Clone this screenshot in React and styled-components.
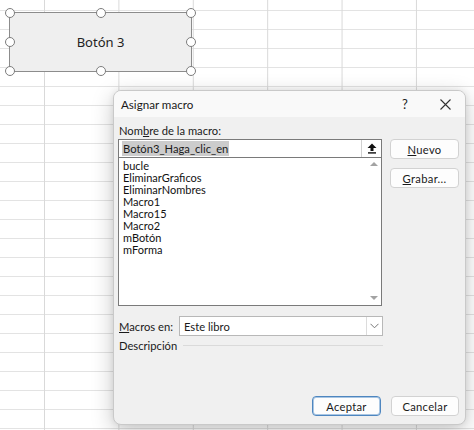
import React from 'react';
import styled, { createGlobalStyle } from 'styled-components';

const GlobalStyle = createGlobalStyle`
  html, body {
    margin: 0;
    padding: 0;
    background: #ffffff;
  }
  * {
    box-sizing: border-box;
  }
`;

const Sheet = styled.div`
  position: relative;
  width: 474px;
  height: 430px;
  overflow: hidden;
  font-family: Lato, 'Noto Sans', sans-serif;
  color: #1a1a1a;
  background-color: #ffffff;
  background-image:
    linear-gradient(to right, #d9d9d9 1px, transparent 1px),
    linear-gradient(to bottom, #e3e3e3 1px, transparent 1px);
  background-size: 74.4px 100%, 100% 19px;
  background-position: 44px 0, 0 10px;
`;

const Shape = styled.div`
  position: absolute;
  left: 9px;
  top: 12px;
  width: 183px;
  height: 60px;
  background: #efefef;
  border: 1.5px solid #8c8c8c;
  display: flex;
  align-items: center;
  justify-content: center;
  font-family: 'Noto Sans', sans-serif;
  font-size: 13px;
  color: #222;
`;

const Handle = styled.span`
  position: absolute;
  left: ${p => p.$x}%;
  top: ${p => p.$y}%;
  width: 10px;
  height: 10px;
  margin: -5px 0 0 -5px;
  border-radius: 50%;
  background: #ffffff;
  border: 1.5px solid #7d7d7d;
`;

const Dialog = styled.div`
  position: absolute;
  left: 113px;
  top: 90px;
  width: 353px;
  height: 335px;
  border-radius: 8px;
  background: #f0f0f0;
  border: 1px solid #c9c9c9;
  box-shadow: 0 6px 22px rgba(0, 0, 0, 0.22), 0 0 6px rgba(0, 0, 0, 0.08);
  display: flex;
  flex-direction: column;
  overflow: hidden;
  font-size: 11.2px;
`;

const TitleBar = styled.div`
  height: 26px;
  background: #f9f9f9;
  display: flex;
  align-items: center;
  padding-left: 7px;
  flex-shrink: 0;
`;

const TitleText = styled.div`
  flex: 1;
  font-size: 11.6px;
  color: #1a1a1a;
`;

const TitleButton = styled.div`
  width: 40px;
  height: 26px;
  display: flex;
  align-items: center;
  justify-content: center;
  font-size: 13px;
  color: #222;
`;

const Body = styled.div`
  flex: 1;
  display: flex;
  flex-direction: column;
  padding: 6px 6px 8px 4px;
`;

const TopRow = styled.div`
  display: flex;
  gap: 8px;
`;

const LeftCol = styled.div`
  width: 265px;
  display: flex;
  flex-direction: column;
`;

const RightCol = styled.div`
  width: 69px;
  padding-top: 16px;
  display: flex;
  flex-direction: column;
  gap: 9px;
`;

const Label = styled.div`
  height: 16px;
  line-height: 16px;
  padding-left: 1px;
  white-space: nowrap;
`;

const NameInput = styled.div`
  height: 19px;
  display: flex;
  background: #ffffff;
  border: 1px solid #7a7a7a;
`;

const InputText = styled.div`
  flex: 1;
  display: flex;
  align-items: center;
  padding-left: 3px;
`;

const Selected = styled.span`
  background: #cccccc;
  line-height: 15px;
  padding: 0 1px;
`;

const UpButton = styled.div`
  width: 20px;
  border-left: 1px solid #d0d0d0;
  display: flex;
  align-items: center;
  justify-content: center;
`;

const ListBox = styled.div`
  height: 149px;
  margin-top: -1px;
  display: flex;
  background: #ffffff;
  border: 1px solid #7a7a7a;
`;

const Items = styled.div`
  flex: 1;
  padding: 2px 0 0 4px;
  display: flex;
  flex-direction: column;
`;

const Item = styled.div`
  height: 12px;
  line-height: 12px;
  font-size: 11px;
  color: #111;
  white-space: nowrap;
`;

const ScrollTrack = styled.div`
  width: 15px;
  display: flex;
  flex-direction: column;
  justify-content: space-between;
  align-items: center;
  padding: 4px 0 5px;
`;

const Arrow = styled.span`
  width: 0;
  height: 0;
  border-left: 4px solid transparent;
  border-right: 4px solid transparent;
  ${p => (p.$down ? 'border-top: 4px solid #a3a3a3;' : 'border-bottom: 4px solid #a3a3a3;')}
`;

const Button = styled.div`
  width: ${p => p.$w || 69}px;
  height: 20px;
  display: flex;
  align-items: center;
  justify-content: center;
  background: #fdfdfd;
  border: 1px solid ${p => (p.$primary ? '#4e86bf' : '#d2d2d2')};
  box-shadow: ${p => (p.$primary ? 'inset 0 0 0 1px #a9c6e3' : 'none')};
  border-radius: 4px;
  color: #1a1a1a;
  letter-spacing: 0.3px;
`;

const MacrosRow = styled.div`
  margin-top: 10px;
  display: flex;
  align-items: center;
`;

const MacrosLabel = styled.div`
  width: 61px;
  padding-left: 1px;
  white-space: nowrap;
`;

const Select = styled.div`
  width: 204px;
  height: 20px;
  display: flex;
  background: #ffffff;
  border: 1px solid #b8b8b8;
`;

const SelectValue = styled.div`
  flex: 1;
  display: flex;
  align-items: center;
  padding-left: 4px;
`;

const SelectArrow = styled.div`
  width: 16px;
  border-left: 1px solid #dcdcdc;
  display: flex;
  align-items: center;
  justify-content: center;
`;

const DescRow = styled.div`
  margin-top: 2px;
  width: 265px;
  height: 14px;
  display: flex;
  align-items: center;
  gap: 6px;
  padding-left: 1px;
`;

const Rule = styled.div`
  flex: 1;
  height: 1px;
  background: #dadada;
`;

const Footer = styled.div`
  margin-top: auto;
  display: flex;
  justify-content: flex-end;
  gap: 10px;
`;

const handles = [
  [0, 0], [50, 0], [100, 0],
  [0, 50], [100, 50],
  [0, 100], [50, 100], [100, 100],
];

const macros = [
  'bucle',
  'EliminarGraficos',
  'EliminarNombres',
  'Macro1',
  'Macro15',
  'Macro2',
  'mBotón',
  'mForma',
];

function App() {
  return (
    <Sheet>
      <GlobalStyle />
      <Shape>
        Botón 3
        {handles.map(([x, y]) => (
          <Handle key={`${x}-${y}`} $x={x} $y={y} />
        ))}
      </Shape>

      <Dialog>
        <TitleBar>
          <TitleText>Asignar macro</TitleText>
          <TitleButton>?</TitleButton>
          <TitleButton>
            <svg width="11" height="11" viewBox="0 0 11 11">
              <path d="M0.5 0.5 L10.5 10.5 M10.5 0.5 L0.5 10.5" stroke="#333" strokeWidth="1.1" />
            </svg>
          </TitleButton>
        </TitleBar>

        <Body>
          <TopRow>
            <LeftCol>
              <Label>Nom<u>b</u>re de la macro:</Label>
              <NameInput>
                <InputText>
                  <Selected>Botón3_Haga_clic_en</Selected>
                </InputText>
                <UpButton>
                  <svg width="10" height="11" viewBox="0 0 10 11">
                    <path d="M5 0.5 L9.5 5 H6.5 V8 H3.5 V5 H0.5 Z" fill="#111" />
                    <rect x="1" y="9.2" width="8" height="1.4" fill="#111" />
                  </svg>
                </UpButton>
              </NameInput>
              <ListBox>
                <Items>
                  {macros.map(m => (
                    <Item key={m}>{m}</Item>
                  ))}
                </Items>
                <ScrollTrack>
                  <Arrow />
                  <Arrow $down />
                </ScrollTrack>
              </ListBox>
            </LeftCol>
            <RightCol>
              <Button><u>N</u>uevo</Button>
              <Button><u>G</u>rabar...</Button>
            </RightCol>
          </TopRow>

          <MacrosRow>
            <MacrosLabel><u>M</u>acros en:</MacrosLabel>
            <Select>
              <SelectValue>Este libro</SelectValue>
              <SelectArrow>
                <svg width="9" height="6" viewBox="0 0 9 6">
                  <path d="M0.5 0.8 L4.5 4.8 L8.5 0.8" fill="none" stroke="#777" strokeWidth="1" />
                </svg>
              </SelectArrow>
            </Select>
          </MacrosRow>

          <DescRow>
            <span>Descripción</span>
            <Rule />
          </DescRow>

          <Footer>
            <Button $primary>Aceptar</Button>
            <Button $w={68}>Cancelar</Button>
          </Footer>
        </Body>
      </Dialog>
    </Sheet>
  );
}

export default App;
